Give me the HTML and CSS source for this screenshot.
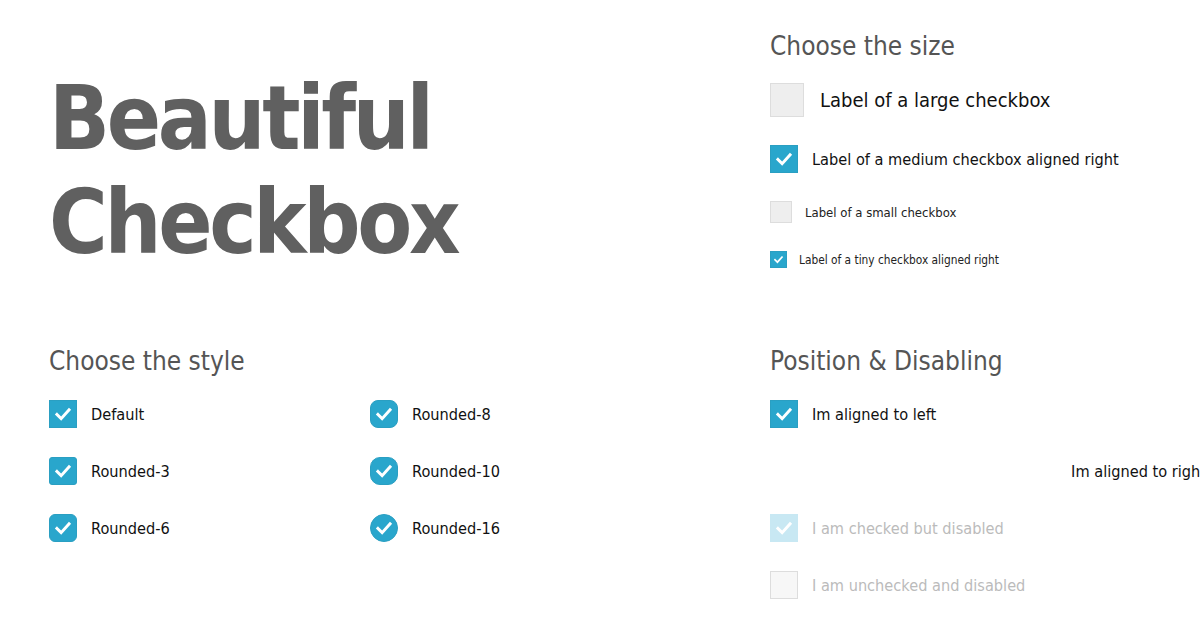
FILE: index.html
```html
<!DOCTYPE html>
<html>
<head>
<meta charset="utf-8">
<link rel="stylesheet" href="styles.css">
</head>
<body>
<div class="page">
  <section class="cell top-left">
    <h1 class="title">Beautiful<br>Checkbox</h1>
  </section>
  <section class="cell top-right">
    <h2 class="heading">Choose the size</h2>
    <div class="list size-list">
      <label class="cb cb-large"><span class="box"></span><span class="text">Label of a large checkbox</span></label>
      <label class="cb cb-medium"><span class="box checked"><svg viewBox="0 0 28 28"><polyline points="7.5,14.5 12,19 20.5,9.5"/></svg></span><span class="text">Label of a medium checkbox aligned right</span></label>
      <label class="cb cb-small"><span class="box"></span><span class="text">Label of a small checkbox</span></label>
      <label class="cb cb-tiny"><span class="box checked"><svg viewBox="0 0 28 28"><polyline points="7.5,14.5 12,19 20.5,9.5"/></svg></span><span class="text">Label of a tiny checkbox aligned right</span></label>
    </div>
  </section>
  <section class="cell bottom-left">
    <h2 class="heading">Choose the style</h2>
    <div class="style-grid">
      <label class="cb cb-medium"><span class="box checked"><svg viewBox="0 0 28 28"><polyline points="7.5,14.5 12,19 20.5,9.5"/></svg></span><span class="text">Default</span></label>
      <label class="cb cb-medium"><span class="box checked r8"><svg viewBox="0 0 28 28"><polyline points="7.5,14.5 12,19 20.5,9.5"/></svg></span><span class="text">Rounded-8</span></label>
      <label class="cb cb-medium"><span class="box checked r3"><svg viewBox="0 0 28 28"><polyline points="7.5,14.5 12,19 20.5,9.5"/></svg></span><span class="text">Rounded-3</span></label>
      <label class="cb cb-medium"><span class="box checked r10"><svg viewBox="0 0 28 28"><polyline points="7.5,14.5 12,19 20.5,9.5"/></svg></span><span class="text">Rounded-10</span></label>
      <label class="cb cb-medium"><span class="box checked r6"><svg viewBox="0 0 28 28"><polyline points="7.5,14.5 12,19 20.5,9.5"/></svg></span><span class="text">Rounded-6</span></label>
      <label class="cb cb-medium"><span class="box checked r16"><svg viewBox="0 0 28 28"><polyline points="7.5,14.5 12,19 20.5,9.5"/></svg></span><span class="text">Rounded-16</span></label>
    </div>
  </section>
  <section class="cell bottom-right">
    <h2 class="heading">Position &amp; Disabling</h2>
    <div class="list pos-list">
      <label class="cb cb-medium"><span class="box checked"><svg viewBox="0 0 28 28"><polyline points="7.5,14.5 12,19 20.5,9.5"/></svg></span><span class="text">Im aligned to left</span></label>
      <label class="cb cb-medium cb-right"><span class="text">Im aligned to right</span><span class="box checked"><svg viewBox="0 0 28 28"><polyline points="7.5,14.5 12,19 20.5,9.5"/></svg></span></label>
      <label class="cb cb-medium disabled"><span class="box checked"><svg viewBox="0 0 28 28"><polyline points="7.5,14.5 12,19 20.5,9.5"/></svg></span><span class="text">I am checked but disabled</span></label>
      <label class="cb cb-medium disabled"><span class="box"></span><span class="text">I am unchecked and disabled</span></label>
    </div>
  </section>
</div>
</body>
</html>
```

FILE: styles.css
```css
html, body {
  margin: 0;
  padding: 0;
  background: #ffffff;
  overflow: hidden;
}

body {
  width: 1200px;
  height: 630px;
  font-family: "DejaVu Sans Condensed", "DejaVu Sans", sans-serif;
  color: #111111;
}

.page {
  display: grid;
  grid-template-columns: 721px 478px;
  grid-template-rows: 315px 285px;
  padding: 30px 0 0 49px;
  width: 1300px;
}

.cell {
  min-width: 0;
}

.title {
  margin: 36px 0 0 0;
  font-size: 89px;
  line-height: 104px;
  font-weight: bold;
  color: #606060;
  letter-spacing: -3.3px;
}

.heading {
  margin: 0;
  font-size: 26px;
  line-height: 32px;
  font-weight: normal;
  color: #555555;
}

.list {
  display: flex;
  flex-direction: column;
}

.size-list {
  margin-top: 21px;
  gap: 28px;
}

.pos-list {
  margin-top: 23px;
  gap: 29px;
}

.style-grid {
  margin-top: 23px;
  display: grid;
  grid-template-columns: 321px 321px;
  row-gap: 29px;
}

.cb {
  display: flex;
  align-items: center;
  cursor: pointer;
}

.box {
  box-sizing: border-box;
  flex: none;
  display: flex;
  align-items: center;
  justify-content: center;
  background: #eeeeee;
  border: 1px solid #dddddd;
}

.box svg {
  width: 100%;
  height: 100%;
  fill: none;
  stroke: #ffffff;
  stroke-width: 3.2;
  stroke-linecap: square;
  stroke-linejoin: miter;
}

.box.checked {
  background: #29a6cc;
  border-color: #2a9fc2;
}

.box.r3 { border-radius: 3px; }
.box.r6 { border-radius: 6px; }
.box.r8 { border-radius: 8px; }
.box.r10 { border-radius: 10px; }
.box.r16 { border-radius: 16px; }

.cb-large { height: 34px; }
.cb-large .box { width: 34px; height: 34px; }
.cb-large .text { margin-left: 16px; font-size: 20px; }

.cb-medium { height: 28px; }
.cb-medium .box { width: 28px; height: 28px; }
.cb-medium .text { margin-left: 14px; font-size: 16.2px; }

.cb-small { height: 22px; }
.cb-small .box { width: 22px; height: 22px; }
.cb-small .text { margin-left: 13px; font-size: 13px; color: #222222; }

.cb-tiny { height: 17px; }
.cb-tiny .box { width: 17px; height: 17px; }
.cb-tiny .text { margin-left: 12px; font-size: 11.8px; color: #222222; }

.cb-right {
  justify-content: flex-end;
}

.cb-right .text {
  margin-left: 0;
  margin-right: 14px;
}

.disabled .text {
  color: #bbbbbb;
}

.disabled .box {
  background: #f7f7f7;
  border-color: #dddddd;
}

.disabled .box.checked {
  background: #c8e8f3;
  border-color: #c8e8f3;
}
```
